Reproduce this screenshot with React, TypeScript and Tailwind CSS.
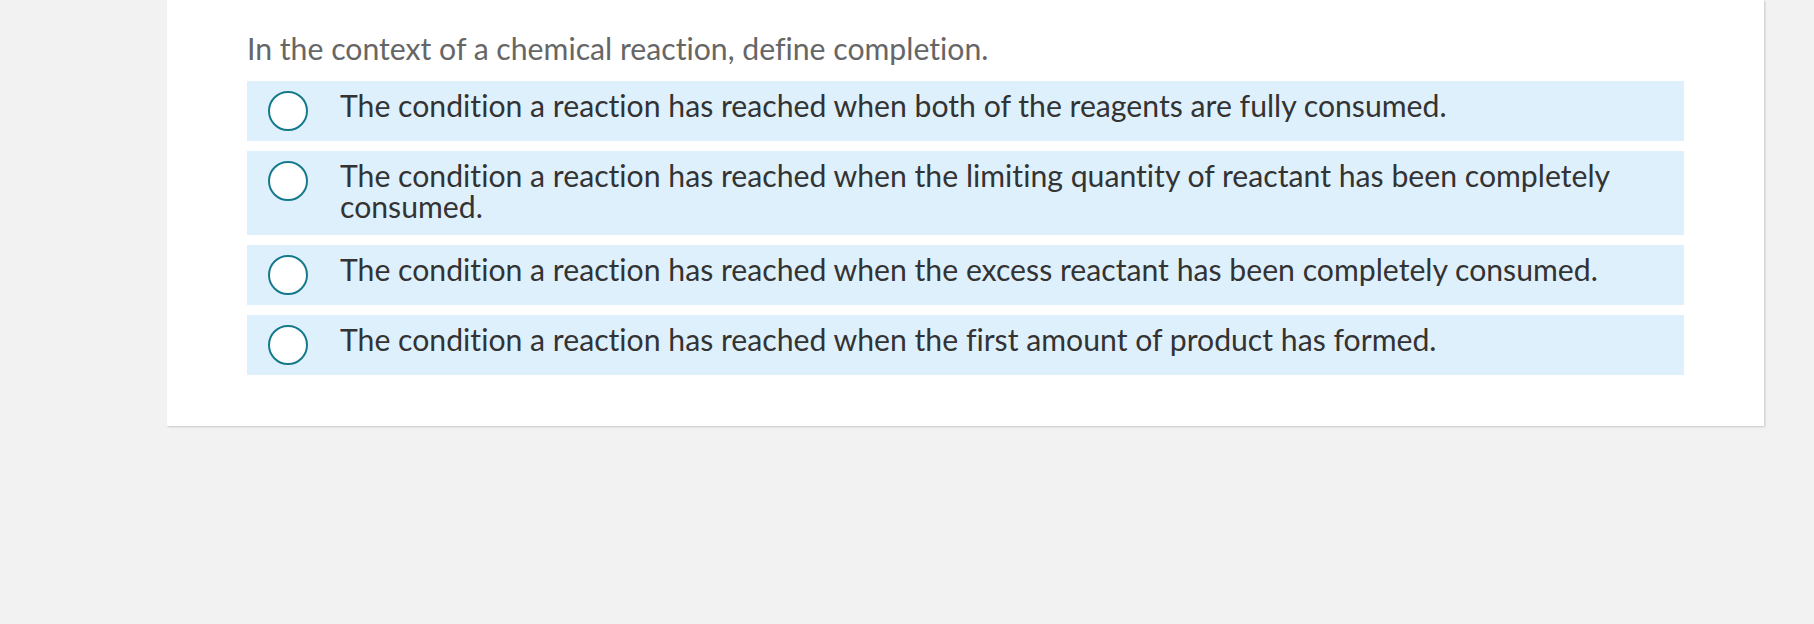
import React, { useState } from 'react';

const options = [
  'The condition a reaction has reached when both of the reagents are fully consumed.',
  'The condition a reaction has reached when the limiting quantity of reactant has been completely consumed.',
  'The condition a reaction has reached when the excess reactant has been completely consumed.',
  'The condition a reaction has reached when the first amount of product has formed.',
];

export default function App() {
  const [picked, setPicked] = useState<number | null>(null);

  return (
    <div className="min-h-screen bg-[#f2f2f2] font-['Lato',sans-serif] [font-variant-ligatures:none]">
      {/* Question card */}
      <div className="ml-[167px] w-[1597px] bg-white pt-[33px] pb-[51px] px-[80px] shadow-[1px_1px_2px_rgba(0,0,0,0.18)]">
        <p className="text-[30.2px] leading-[31px] text-[#666666] mb-[17px]">
          In the context of a chemical reaction, define completion.
        </p>
        <div className="flex flex-col gap-[10px]">
          {options.map((opt, i) => (
            <label
              key={i}
              className="flex items-start bg-[#dff0fd] py-[10px] cursor-pointer"
              onClick={() => setPicked(i)}
            >
              <span className="ml-[21px] mr-[32px] flex h-[40px] w-[40px] shrink-0 items-center justify-center rounded-full border-2 border-[#157a8c] bg-white">
                {picked === i && <span className="h-[20px] w-[20px] rounded-full bg-[#157a8c]" />}
              </span>
              <span className="flex-1 pr-[40px] -mt-[1px] pb-[3px] text-[30.2px] leading-[31px] text-[#333333]">
                {opt}
              </span>
            </label>
          ))}
        </div>
      </div>
    </div>
  );
}
